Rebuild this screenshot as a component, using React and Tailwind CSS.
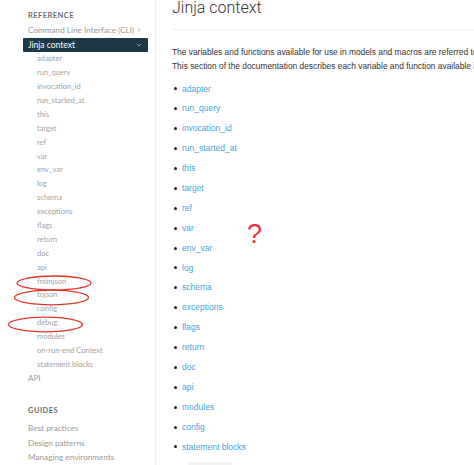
import React from "react";
import { ChevronRight, ChevronDown } from "lucide-react";

const subItems = [
  "adapter","run_query","invocation_id","run_started_at","this","target","ref","var","env_var","log","schema","exceptions","flags","return","doc","api","fromjson","tojson","config","debug","modules","on-run-end Context","statement blocks",
];

const links = [
  "adapter","run_query","invocation_id","run_started_at","this","target","ref","var","env_var","log","schema","exceptions","flags","return","doc","api","modules","config","statement blocks",
];

export default function App() {
  return (
    <div className="relative flex w-[474px] h-[465px] overflow-hidden bg-white">
      {/* Sidebar */}
      <aside
        className="w-[156px] shrink-0 border-r border-[#eeeeee] pl-[23px] pt-[9px] flex flex-col"
        style={{ fontFamily: "Lato, 'Noto Sans', sans-serif" }}
      >
        <div className="h-[13px] px-[5px] text-[7.5px] font-bold tracking-[0.06em] text-[#6f6f6f] leading-[13px]">REFERENCE</div>
        <div className="h-[16px] pl-[5px] pr-[5px] w-[125px] flex items-center justify-between text-[8.2px] text-[#9a9a9a]">
          <span>Command Line Interface (CLI)</span>
          <ChevronRight size={8} strokeWidth={2} className="text-[#9a9a9a]" />
        </div>
        <div className="h-[14px] w-[125px] px-[5px] flex items-center justify-between bg-[#1c3847] rounded-[1px] text-[8.5px] text-white">
          <span>Jinja context</span>
          <ChevronDown size={8} strokeWidth={2} className="text-[#c8d3da]" />
        </div>
        <div className="flex flex-col">
          {subItems.map((s) => (
            <div key={s} className="h-[13.9px] pl-[14px] flex items-center text-[7.5px] text-[#a3a3a3]">{s}</div>
          ))}
        </div>
        <div className="h-[14px] px-[5px] flex items-center text-[8px] text-[#9a9a9a]">API</div>
        <div className="h-[14px] mt-[18px] px-[5px] flex items-center text-[7.5px] font-bold tracking-[0.06em] text-[#6f6f6f]">GUIDES</div>
        <div className="h-[14px] mt-[4px] px-[5px] flex items-center text-[8.2px] text-[#9a9a9a]">Best practices</div>
        <div className="h-[14.5px] px-[5px] flex items-center text-[8.2px] text-[#9a9a9a]">Design patterns</div>
        <div className="h-[14.5px] px-[5px] flex items-center text-[8.2px] text-[#9a9a9a]">Managing environments</div>
      </aside>

      {/* Main */}
      <main
        className="flex-1 pl-[16px] flex flex-col min-w-0 overflow-hidden"
        style={{ fontFamily: "'Liberation Sans', Arial, sans-serif" }}
      >
        <h1
          className="h-[30px] shrink-0 border-b border-[#eeeeee] text-[16px] font-light leading-[16px] text-[#333] whitespace-nowrap"
          style={{ fontFamily: "Roboto, 'Liberation Sans', sans-serif" }}
        >
          Jinja context
        </h1>
        <div className="mt-[15px] shrink-0 text-[8.4px] leading-[14px] text-[#333] whitespace-nowrap">
          <p>The variables and functions available for use in models and macros are referred to as the Jinja context.</p>
          <p>This section of the documentation describes each variable and function available in the Jinja context.</p>
        </div>
        <ul className="mt-[6px] shrink-0 flex flex-col">
          {links.map((l) => (
            <li key={l} className="h-[19.9px] flex items-center">
              <span className="ml-[2px] w-[3px] h-[3px] rounded-full bg-[#222]" />
              <span className="ml-[5px] text-[8.5px] text-[#4aa3dc]">{l}</span>
            </li>
          ))}
        </ul>
        <div className="mt-[5px] shrink-0 ml-[16px] w-[44px] h-[6px] bg-[#f2f2f2]" />
      </main>

      {/* Annotations */}
      <svg className="absolute left-0 top-0 pointer-events-none" width="474" height="465">
        <ellipse cx="54" cy="283" rx="37" ry="7" fill="none" stroke="#e0352b" strokeWidth="1.3" />
        <ellipse cx="51.5" cy="297.5" rx="37" ry="7.3" fill="none" stroke="#e0352b" strokeWidth="1.3" />
        <ellipse cx="45.5" cy="324.5" rx="37" ry="7.3" fill="none" stroke="#e0352b" strokeWidth="1.3" />
      </svg>
      <div
        className="absolute left-[247px] top-[219px] text-[27px] leading-[30px] text-[#e8323c]"
        style={{ fontFamily: "'Liberation Sans', Arial, sans-serif" }}
      >
        ?
      </div>
    </div>
  );
}
